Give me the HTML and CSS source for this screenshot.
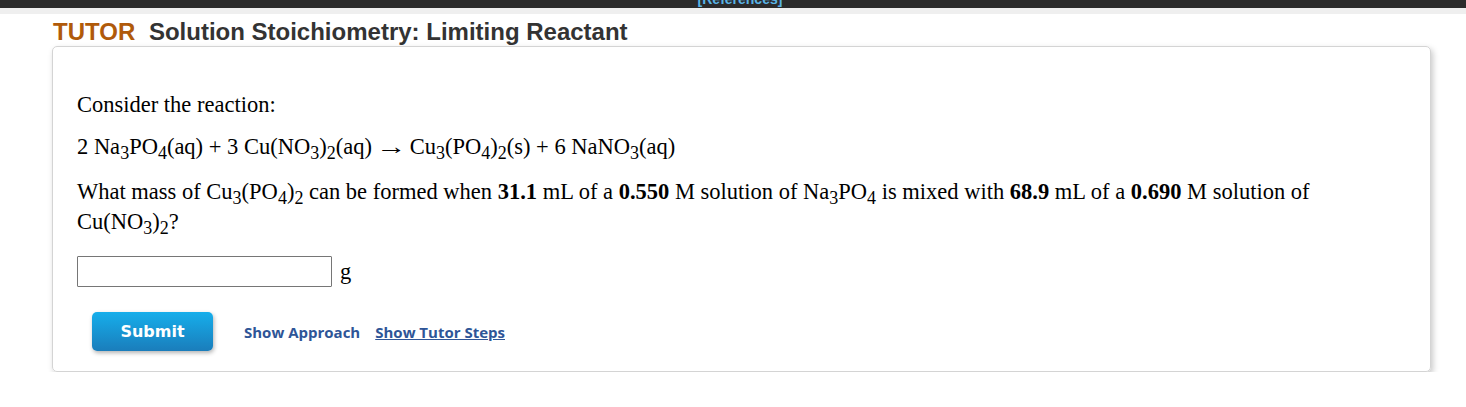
FILE: index.html
```html
<!DOCTYPE html>
<html lang="en">
<head>
<meta charset="utf-8">
<title>Solution Stoichiometry: Limiting Reactant</title>
<link rel="stylesheet" href="styles.css">
</head>
<body>
<div class="topbar"><span class="refs">[References]</span></div>
<div class="strip"></div>
<main class="page">
  <h1 class="title"><span class="tag">TUTOR</span> Solution Stoichiometry: Limiting Reactant</h1>
  <section class="card">
    <p class="line">Consider the reaction:</p>
    <p class="line reaction">2 Na<sub>3</sub>PO<sub>4</sub>(aq) + 3 Cu(NO<sub>3</sub>)<sub>2</sub>(aq) <span class="arrow">&rarr;</span> Cu<sub>3</sub>(PO<sub>4</sub>)<sub>2</sub>(s) + 6 NaNO<sub>3</sub>(aq)</p>
    <p class="line question">What mass of Cu<sub>3</sub>(PO<sub>4</sub>)<sub>2</sub> can be formed when <b>31.1</b> mL of a <b>0.550</b> M solution of Na<sub>3</sub>PO<sub>4</sub> is mixed with <b>68.9</b> mL of a <b>0.690</b> M solution of Cu(NO<sub>3</sub>)<sub>2</sub>?</p>
    <div class="answer">
      <input class="field" type="text">
      <span class="unit">g</span>
    </div>
    <div class="actions">
      <button class="submit" type="button">Submit</button>
      <a class="link" href="#">Show Approach</a>
      <a class="link underline" href="#">Show Tutor Steps</a>
    </div>
  </section>
</main>
</body>
</html>
```

FILE: styles.css
```css
html, body {
  margin: 0;
  padding: 0;
  background: #ffffff;
}

.topbar {
  height: 8px;
  background: #2b2b2b;
  overflow: hidden;
  display: flex;
  justify-content: center;
}

.refs {
  font-family: "Liberation Sans", Arial, sans-serif;
  font-weight: bold;
  font-size: 14px;
  color: #5ab4e6;
  line-height: 14px;
  margin-top: -8px;
  margin-left: 14px;
}

.strip {
  height: 6px;
  background: #efefef;
}

.page {
  padding: 0 35px 0 52px;
}

.title {
  margin: 0;
  padding: 5px 0 0 1px;
  height: 27px;
  font-family: "Liberation Sans", Arial, sans-serif;
  font-weight: bold;
  font-size: 24px;
  line-height: 26px;
  color: #333333;
  white-space: nowrap;
}

.tag {
  color: #b05a0a;
  margin-right: 7px;
}

.card {
  box-sizing: border-box;
  width: 1379px;
  height: 326px;
  border: 1px solid #d4d4d4;
  border-radius: 5px;
  box-shadow: 2px 3px 6px rgba(0, 0, 0, 0.22);
  padding: 43px 24px 0 24px;
  font-family: "Liberation Serif", "Times New Roman", serif;
  font-size: 22.5px;
  color: #000000;
}

.line {
  margin: 0;
  line-height: 30px;
}

.line sub {
  font-size: 18px;
  line-height: 1;
  vertical-align: -5px;
}

.reaction {
  margin-top: 12px;
}

.arrow {
  display: inline-block;
  transform: scaleX(1.35);
  margin: 0 2px;
}

.question {
  margin-top: 15px;
  max-width: 1270px;
}

.answer {
  display: flex;
  align-items: center;
  margin-top: 19px;
}

.field {
  box-sizing: border-box;
  width: 255px;
  height: 31px;
  margin: 0;
  border: 1px solid #767676;
  border-radius: 1px;
  background: #ffffff;
}

.unit {
  margin-left: 8px;
}

.actions {
  display: flex;
  align-items: center;
  margin-top: 25px;
  padding-left: 15px;
}

.submit {
  width: 121px;
  height: 39px;
  border: none;
  border-radius: 5px;
  background: linear-gradient(#16aeeb, #1a7dbb);
  box-shadow: 1px 2px 4px rgba(0, 0, 0, 0.3);
  color: #ffffff;
  font-family: "DejaVu Sans", Verdana, sans-serif;
  font-weight: bold;
  font-size: 16px;
  padding: 0;
}

.link {
  font-family: "Open Sans", "Segoe UI", sans-serif;
  font-weight: bold;
  font-size: 15px;
  color: #2e5597;
  text-decoration: none;
  margin-left: 31px;
}

.link.underline {
  text-decoration: underline;
  margin-left: 15px;
}
```
